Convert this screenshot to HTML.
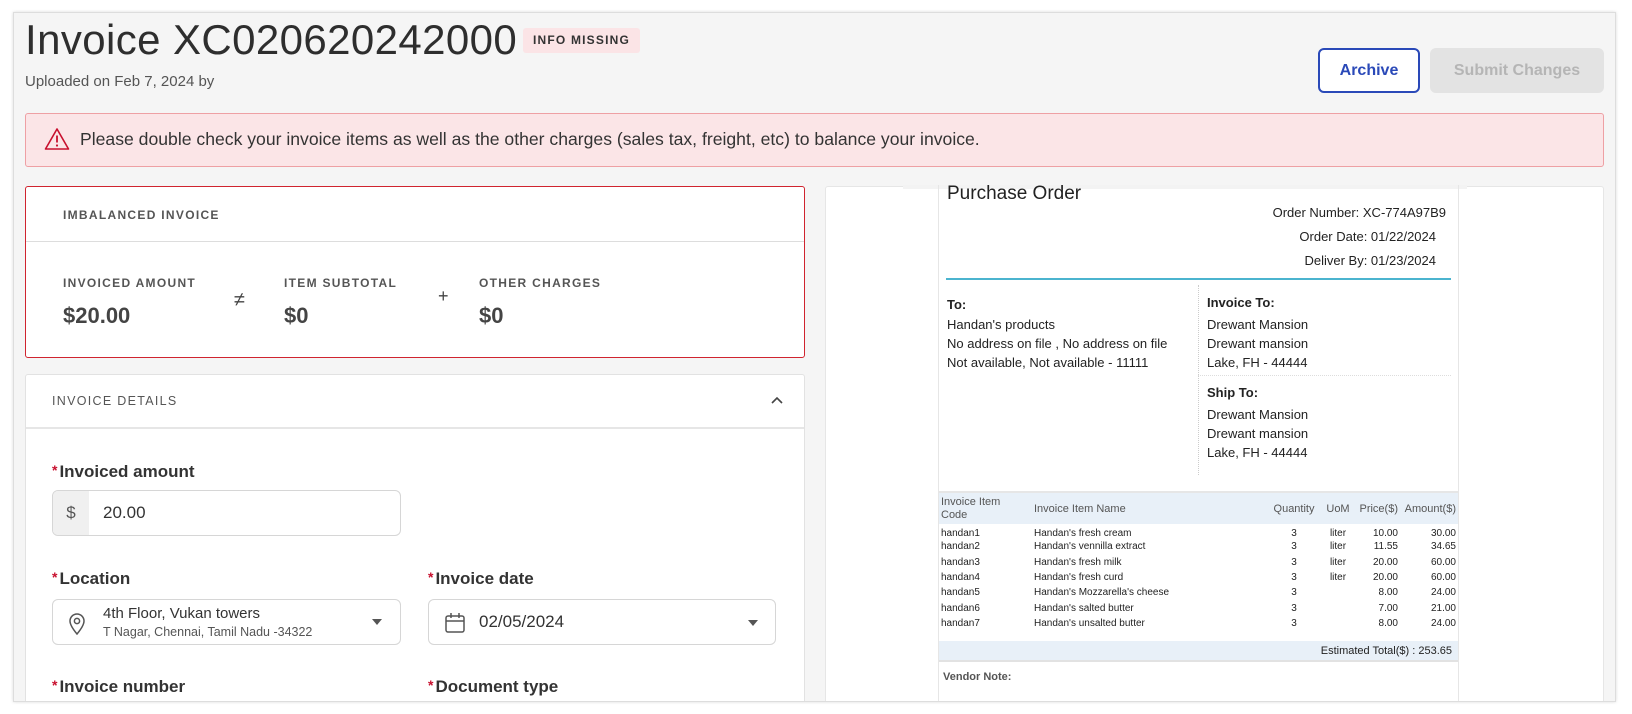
<!DOCTYPE html>
<html><head><meta charset="utf-8">
<style>
*{box-sizing:border-box;margin:0;padding:0}
body{width:1632px;height:714px;background:#fff;font-family:"Liberation Sans",sans-serif;color:#333;position:relative;overflow:hidden}
.frame{position:absolute;left:13px;top:12px;width:1603px;height:690px;background:#f5f5f5;border:1px solid #ddd;box-shadow:0 0 3px rgba(0,0,0,.15);overflow:hidden}
.a{position:absolute}
.title{left:11px;top:3px;font-size:42px;color:#2e2e2e;letter-spacing:0.4px}
.badge{left:509px;top:15px;width:117px;height:25px;background:#fbe4e6;border-radius:3px;font-size:12px;font-weight:bold;letter-spacing:1.2px;color:#333;text-align:center;line-height:25px}
.up{left:11px;top:60px;font-size:15px;color:#555}
.btn{border-radius:6px;font-size:16px;font-weight:bold;text-align:center}
.alert{left:11px;top:100px;width:1579px;height:54px;background:#fbe5e7;border:1px solid #eea0a4;border-radius:3px}
.alert span{position:absolute;left:54px;top:15px;font-size:17.6px;color:#333}
.card{background:#fff;border-radius:3px}
.lbl{font-size:12px;font-weight:bold;letter-spacing:1.3px;color:#555}
.val{font-size:22px;font-weight:bold;color:#444}
.flbl{font-size:17px;font-weight:bold;color:#333}
.flbl b{color:#c8102e;font-size:14px;vertical-align:top;margin-right:2px}
.inp{background:#fff;border:1px solid #d6d6d6;border-radius:6px;height:46px}
.doc{font-family:"Liberation Sans",sans-serif;color:#222}
table{border-collapse:collapse;font-size:10px;width:519px}
td{padding:0 2px;height:15.3px;white-space:nowrap}
.r{text-align:right}.c{text-align:center}
</style></head><body>
<div class="frame">
 <div class="a title">Invoice XC020620242000</div>
 <div class="a badge">INFO MISSING</div>
 <div class="a up">Uploaded on Feb 7, 2024 by</div>
 <div class="a btn" style="left:1304px;top:35px;width:102px;height:45px;border:2px solid #2a49b8;color:#2a49b8;line-height:41px;background:#fff">Archive</div>
 <div class="a btn" style="left:1416px;top:35px;width:174px;height:45px;background:#e3e3e3;color:#b5b5b5;line-height:45px">Submit Changes</div>
 <div class="a alert">
  <svg class="a" style="left:18px;top:13px" width="26" height="24" viewBox="0 0 26 24"><path d="M13 2 L24.5 22 H1.5 Z" fill="none" stroke="#c8102e" stroke-width="1.6" stroke-linejoin="round"/><path d="M13 8.5v7" stroke="#c8102e" stroke-width="1.8"/><circle cx="13" cy="18.5" r="1.1" fill="#c8102e"/></svg>
  <span>Please double check your invoice items as well as the other charges (sales tax, freight, etc) to balance your invoice.</span>
 </div>
 <div class="a card" style="left:11px;top:173px;width:780px;height:172px;border:1px solid #d0242f">
  <div class="a lbl" style="left:37px;top:21px">IMBALANCED INVOICE</div>
  <div class="a" style="left:0;top:54px;width:778px;border-top:1px solid #ddd"></div>
  <div class="a lbl" style="left:37px;top:89px">INVOICED AMOUNT</div>
  <div class="a val" style="left:37px;top:116px">$20.00</div>
  <div class="a" style="left:208px;top:102px;font-size:20px;color:#444">≠</div>
  <div class="a lbl" style="left:258px;top:89px">ITEM SUBTOTAL</div>
  <div class="a val" style="left:258px;top:116px">$0</div>
  <div class="a" style="left:412px;top:99px;font-size:18px;color:#444">+</div>
  <div class="a lbl" style="left:453px;top:89px">OTHER CHARGES</div>
  <div class="a val" style="left:453px;top:116px">$0</div>
 </div>
 <div class="a card" style="left:11px;top:361px;width:780px;height:340px;border:1px solid #e2e2e2">
  <div class="a lbl" style="left:26px;top:19px;font-weight:normal;color:#555;font-size:12.5px">INVOICE DETAILS</div>
  <svg class="a" style="left:744px;top:20px" width="14" height="10" viewBox="0 0 14 10"><path d="M2 8 L7 3 L12 8" fill="none" stroke="#444" stroke-width="1.6"/></svg>
  <div class="a" style="left:0;top:52px;width:778px;border-top:2px solid #e6e6e6"></div>
  <div class="a flbl" style="left:26px;top:87px"><b>*</b>Invoiced amount</div>
  <div class="a inp" style="left:26px;top:115px;width:349px;overflow:hidden">
   <div class="a" style="left:0;top:0;width:36px;height:44px;background:#f0f0f0;font-size:17px;color:#555;line-height:44px;text-align:center">$</div>
   <div class="a" style="left:50px;top:12px;font-size:17px;color:#333">20.00</div>
  </div>
  <div class="a flbl" style="left:26px;top:194px"><b>*</b>Location</div>
  <div class="a inp" style="left:26px;top:224px;width:349px">
   <svg class="a" style="left:14px;top:12px" width="20" height="24" viewBox="0 0 20 24"><path d="M10 22 C5 16 3 12 3 9 a7 7 0 0 1 14 0 c0 3 -2 7 -7 13z" fill="none" stroke="#555" stroke-width="1.5"/><circle cx="10" cy="9" r="2.6" fill="none" stroke="#555" stroke-width="1.5"/></svg>
   <div class="a" style="left:50px;top:5px;font-size:15px;color:#333">4th Floor, Vukan towers</div>
   <div class="a" style="left:50px;top:25px;font-size:12.5px;color:#555">T Nagar, Chennai, Tamil Nadu -34322</div>
   <div class="a" style="left:319px;top:19px;width:0;height:0;border-left:5px solid transparent;border-right:5px solid transparent;border-top:6px solid #555"></div>
  </div>
  <div class="a flbl" style="left:402px;top:194px"><b>*</b>Invoice date</div>
  <div class="a inp" style="left:402px;top:224px;width:348px">
   <svg class="a" style="left:15px;top:12px" width="22" height="22" viewBox="0 0 22 22"><rect x="2" y="4" width="18" height="16" rx="2" fill="none" stroke="#555" stroke-width="1.5"/><path d="M2 9h18M7 1v5M15 1v5" stroke="#555" stroke-width="1.5"/></svg>
   <div class="a" style="left:50px;top:12px;font-size:17px;color:#333">02/05/2024</div>
   <div class="a" style="left:319px;top:20px;width:0;height:0;border-left:5px solid transparent;border-right:5px solid transparent;border-top:6px solid #555"></div>
  </div>
  <div class="a flbl" style="left:26px;top:302px"><b>*</b>Invoice number</div>
  <div class="a flbl" style="left:402px;top:302px"><b>*</b>Document type</div>
 </div>
 <div class="a card" style="left:811px;top:173px;width:779px;height:530px;border:1px solid #e6e6e6">
  <div class="a" style="left:77px;top:-2px;width:564px;height:4px;background:#f3f3f3"></div>
  <div class="a doc" style="left:112px;top:-2px;width:521px;height:540px;border-left:1px solid #e6e6e6;border-right:1px solid #e6e6e6">
   <div class="a" style="left:8px;top:-2px;font-size:19px">Purchase Order</div>
   <div class="a r" style="right:12px;top:20px;font-size:13px">Order Number: XC-774A97B9</div>
   <div class="a r" style="right:22px;top:44px;font-size:13px">Order Date: 01/22/2024</div>
   <div class="a r" style="right:22px;top:68px;font-size:13px">Deliver By: 01/23/2024</div>
   <div class="a" style="left:7px;top:93px;width:505px;height:2px;background:#4bb4cf"></div>
   <div class="a" style="left:8px;top:110px;font-size:13px;font-weight:bold;line-height:19px">To:</div>
   <div class="a" style="left:8px;top:130px;font-size:13px;line-height:19px">Handan's products<br>No address on file , No address on file<br>Not available, Not available - 11111</div>
   <div class="a" style="left:259px;top:100px;height:190px;border-left:1px dotted #ccc"></div>
   <div class="a" style="left:259px;top:190px;width:253px;border-top:1px dotted #ddd"></div>
   <div class="a" style="left:268px;top:110px;font-size:13px;font-weight:bold">Invoice To:</div>
   <div class="a" style="left:268px;top:130px;font-size:13px;line-height:19px">Drewant Mansion<br>Drewant mansion<br>Lake, FH - 44444</div>
   <div class="a" style="left:268px;top:200px;font-size:13px;font-weight:bold">Ship To:</div>
   <div class="a" style="left:268px;top:220px;font-size:13px;line-height:19px">Drewant Mansion<br>Drewant mansion<br>Lake, FH - 44444</div>
   <div class="a" style="left:0;top:306px;width:519px;border-top:2px solid #e6e6e6"></div>
   <table class="a" style="left:0;top:308px">
    <tr style="background:#e8f0f8;color:#555;height:31px;font-size:11px"><td style="width:93px;white-space:normal;line-height:13px">Invoice Item<br>Code</td><td>Invoice Item Name</td><td class="c" style="width:52px">Quantity</td><td class="c" style="width:36px">UoM</td><td class="r" style="width:44px">Price($)</td><td class="r" style="width:58px">Amount($)</td></tr>
    <tr><td style="padding-top:4px">handan1</td><td style="padding-top:4px">Handan's fresh cream</td><td class="c" style="padding-top:4px">3</td><td class="c" style="padding-top:4px">liter</td><td class="r" style="padding-top:4px">10.00</td><td class="r" style="padding-top:4px">30.00</td></tr>
    <tr><td>handan2</td><td>Handan's vennilla extract</td><td class="c">3</td><td class="c">liter</td><td class="r">11.55</td><td class="r">34.65</td></tr>
    <tr><td>handan3</td><td>Handan's fresh milk</td><td class="c">3</td><td class="c">liter</td><td class="r">20.00</td><td class="r">60.00</td></tr>
    <tr><td>handan4</td><td>Handan's fresh curd</td><td class="c">3</td><td class="c">liter</td><td class="r">20.00</td><td class="r">60.00</td></tr>
    <tr><td>handan5</td><td>Handan's Mozzarella's cheese</td><td class="c">3</td><td></td><td class="r">8.00</td><td class="r">24.00</td></tr>
    <tr><td>handan6</td><td>Handan's salted butter</td><td class="c">3</td><td></td><td class="r">7.00</td><td class="r">21.00</td></tr>
    <tr><td>handan7</td><td>Handan's unsalted butter</td><td class="c">3</td><td></td><td class="r">8.00</td><td class="r">24.00</td></tr>
   </table>
   <div class="a" style="left:0;top:456px;width:519px;height:21px;background:#e8f0f8;border-bottom:2px solid #e2e2e2;font-size:11px;text-align:right;padding-right:6px;line-height:20px">Estimated Total($) : 253.65</div>
   <div class="a" style="left:4px;top:486px;font-size:11px;font-weight:bold;color:#555">Vendor Note:</div>
  </div>
 </div>
</div>
</body></html>
